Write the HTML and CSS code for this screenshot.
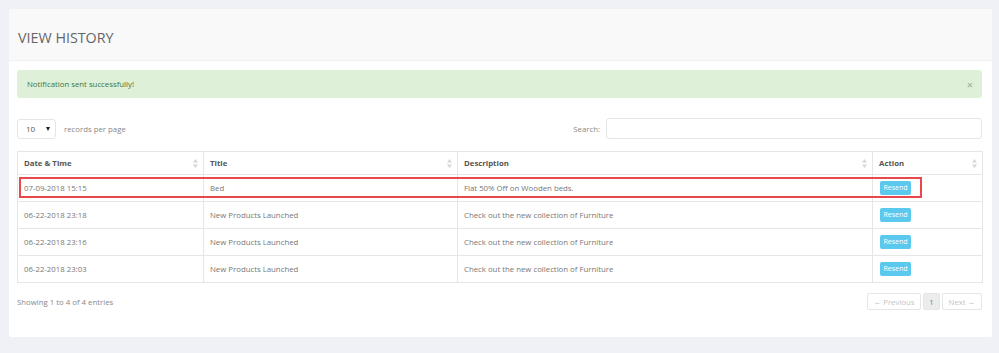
FILE: index.html
```html
<!DOCTYPE html>
<html>
<head>
<meta charset="utf-8">
<link rel="stylesheet" href="styles.css">
</head>
<body>
<div class="page">
  <div class="panel">
    <div class="panel-head"><h1 class="title">VIEW HISTORY</h1></div>
    <div class="panel-body">
      <div class="alert">
        <span>Notification sent successfully!</span>
        <span class="close">&times;</span>
      </div>
      <div class="controls">
        <div class="length">
          <div class="select"><span>10</span><span class="caret"></span></div>
          <span class="muted">records per page</span>
        </div>
        <div class="search">
          <span class="muted">Search:</span>
          <div class="input"></div>
        </div>
      </div>
      <div class="table-wrap">
        <table class="grid">
          <colgroup><col class="c1"><col class="c2"><col class="c3"><col class="c4"></colgroup>
          <thead>
            <tr>
              <th><div class="th">Date &amp; Time<svg class="sort" viewBox="0 0 5 9"><path d="M2.5 0L5 3.5H0Z M2.5 9L5 5.5H0Z"/></svg></div></th>
              <th><div class="th">Title<svg class="sort" viewBox="0 0 5 9"><path d="M2.5 0L5 3.5H0Z M2.5 9L5 5.5H0Z"/></svg></div></th>
              <th><div class="th">Description<svg class="sort" viewBox="0 0 5 9"><path d="M2.5 0L5 3.5H0Z M2.5 9L5 5.5H0Z"/></svg></div></th>
              <th><div class="th">Action<svg class="sort" viewBox="0 0 5 9"><path d="M2.5 0L5 3.5H0Z M2.5 9L5 5.5H0Z"/></svg></div></th>
            </tr>
          </thead>
          <tbody>
            <tr><td>07-09-2018 15:15</td><td>Bed</td><td>Flat 50% Off on Wooden beds.</td><td><span class="btn">Resend</span></td></tr>
            <tr><td>06-22-2018 23:18</td><td>New Products Launched</td><td>Check out the new collection of Furniture</td><td><span class="btn">Resend</span></td></tr>
            <tr><td>06-22-2018 23:16</td><td>New Products Launched</td><td>Check out the new collection of Furniture</td><td><span class="btn">Resend</span></td></tr>
            <tr><td>06-22-2018 23:03</td><td>New Products Launched</td><td>Check out the new collection of Furniture</td><td><span class="btn">Resend</span></td></tr>
          </tbody>
        </table>
        <div class="highlight"></div>
      </div>
      <div class="footer">
        <span class="muted">Showing 1 to 4 of 4 entries</span>
        <div class="pager">
          <span class="pg disabled">&larr; Previous</span>
          <span class="pg active">1</span>
          <span class="pg disabled">Next &rarr;</span>
        </div>
      </div>
    </div>
  </div>
</div>
</body>
</html>
```
FILE: styles.css
```css
html, body {
  margin: 0;
  padding: 0;
  background: #f0f1f6;
  font-family: "Open Sans", "Liberation Sans", sans-serif;
  color: #777;
}
.page {
  padding: 9px 7px 16px 9px;
}
.panel {
  background: #fff;
  border-radius: 2px;
  height: 328px;
  box-sizing: border-box;
}
.panel-head {
  height: 52px;
  background: #f9f9f9;
  border-bottom: 1px solid #f0f0f0;
  box-sizing: border-box;
  display: flex;
  align-items: center;
  padding: 5px 9px 0;
  border-radius: 2px 2px 0 0;
}
.title {
  margin: 0;
  font-size: 14.3px;
  font-weight: 400;
  color: #666;
  letter-spacing: 0;
}
.panel-body {
  padding: 9px 10px 0 8px;
}
.alert {
  height: 28px;
  background: #dff0d8;
  border-radius: 3px;
  color: #3c763d;
  font-size: 7.8px;
  display: flex;
  align-items: center;
  justify-content: space-between;
  padding: 0 9px 0 10px;
  box-sizing: border-box;
}
.close {
  color: #9aa99a;
  font-size: 11px;
  line-height: 1;
}
.controls {
  margin-top: 20px;
  display: flex;
  justify-content: space-between;
  align-items: center;
  height: 21px;
}
.length, .search {
  display: flex;
  align-items: center;
}
.select {
  width: 39px;
  height: 20px;
  border: 1px solid #e6e6e6;
  border-radius: 3px;
  box-sizing: border-box;
  display: flex;
  align-items: center;
  justify-content: space-between;
  padding: 0 5px 0 8px;
  font-size: 8px;
  color: #555;
}
.caret {
  width: 0;
  height: 0;
  border-left: 2.5px solid transparent;
  border-right: 2.5px solid transparent;
  border-top: 4px solid #222;
}
.muted {
  font-size: 7.8px;
  color: #888;
}
.length .muted { margin-left: 8px; }
.search .muted { margin-right: 6px; }
.input {
  width: 376px;
  height: 21px;
  border: 1px solid #e6e6e6;
  border-radius: 3px;
  box-sizing: border-box;
}
.table-wrap {
  position: relative;
  margin-top: 12px;
}
.grid {
  width: 965px;
  border-collapse: collapse;
  table-layout: fixed;
  font-size: 7.8px;
}
.c1 { width: 186px; }
.c2 { width: 254px; }
.c3 { width: 415px; }
.c4 { width: 110px; }
.grid th, .grid td {
  border: 1px solid #e6e6e6;
  padding: 0 6px;
  text-align: left;
  white-space: nowrap;
}
.grid th {
  height: 22px;
  font-weight: 700;
  color: #555;
}
.grid td {
  height: 26px;
  color: #777;
}
.th {
  display: flex;
  align-items: center;
  justify-content: space-between;
}
.sort {
  width: 5px;
  height: 9px;
  fill: #d6d6d6;
  margin-right: -1px;
}
.btn {
  display: inline-block;
  background: #5bc8ee;
  color: #fff;
  font-size: 7px;
  padding: 0 3.5px;
  height: 14px;
  line-height: 14px;
  border-radius: 2px;
  margin-left: 1px;
}
.highlight {
  position: absolute;
  left: 2px;
  top: 26px;
  width: 903px;
  height: 21px;
  border: 2px solid #e8474b;
  box-sizing: border-box;
  pointer-events: none;
}
.footer {
  margin-top: 10px;
  display: flex;
  justify-content: space-between;
  align-items: center;
  height: 17px;
}
.pager {
  display: flex;
  gap: 2px;
}
.pg {
  height: 17px;
  box-sizing: border-box;
  border: 1px solid #e6e6e6;
  border-radius: 2px;
  font-size: 7.8px;
  display: flex;
  align-items: center;
  justify-content: center;
}
.pg.disabled { color: #c4c4c4; }
.pg:first-child { width: 54px; }
.pg.active { width: 17px; background: #ececec; color: #777; }
.pg:last-child { width: 40px; }
```
